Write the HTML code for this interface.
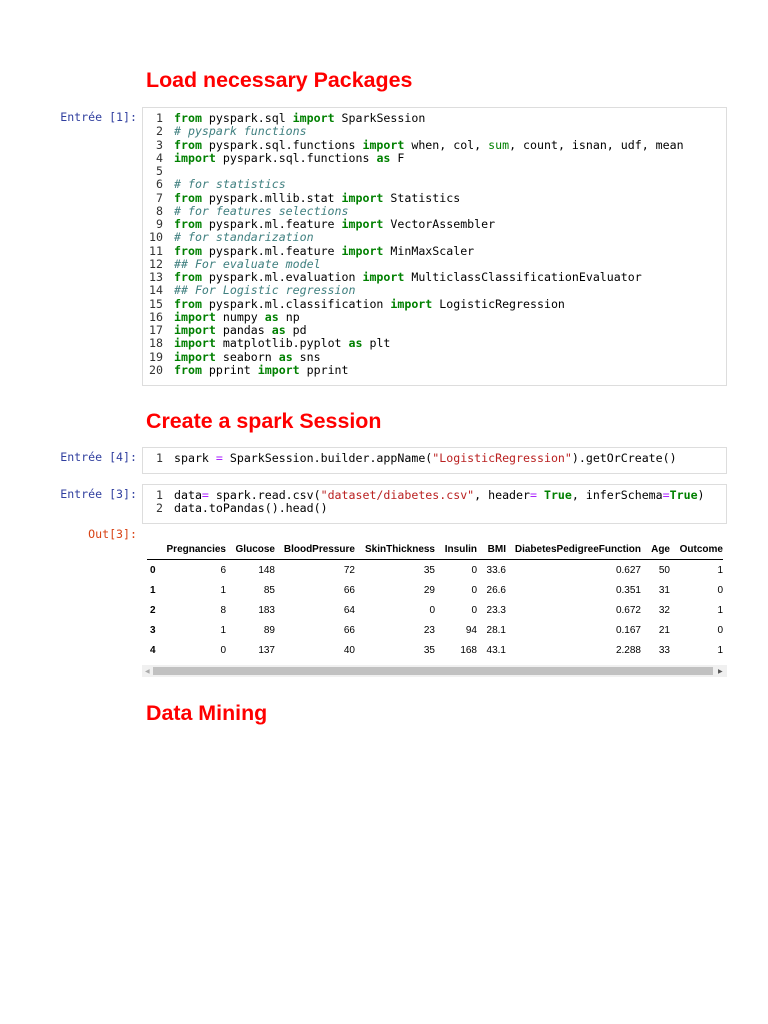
<!DOCTYPE html>
<html><head><meta charset="utf-8"><style>
body{margin:0;width:768px;height:1024px;background:#fff;position:relative;font-family:"Liberation Sans",sans-serif;}
.h{position:absolute;left:146px;color:#f00;font-weight:bold;font-size:21.4px;line-height:24px;margin:0}
.p{position:absolute;left:0;width:137px;text-align:right;font-family:"DejaVu Sans Mono",monospace;font-size:11.6px;color:#303f9f;line-height:13.25px}
.o{color:#d84315}
.box{position:absolute;left:142px;width:583px;border:1px solid #ddd;background:#fff;}
pre{margin:0;font-family:"DejaVu Sans Mono",monospace;font-size:11.6px;line-height:13.25px;color:#000;padding:4px 0 0 0}
.n{display:inline-block;width:20px;text-align:right;color:#333;margin-right:11px}
.k{color:#008000;font-weight:bold}.c{color:#408080;font-style:italic}.s{color:#ba2121}.b{color:#008000}.op{color:#aa22ff}
table{position:absolute;left:147px;top:539px;border-collapse:collapse;table-layout:fixed;font-size:10px;color:#000}
td,th{padding:0;text-align:right;height:20px;white-space:nowrap;overflow:visible}
th{font-weight:bold}
thead th{border-bottom:1px solid #000;height:20px}
tbody th{text-align:left;padding-left:3px}
</style></head><body>
<div class="h" style="top:68px">Load necessary Packages</div>
<div class="p" style="top:111px">Entrée [1]:</div>
<div class="box" style="top:107px;height:277px"><pre>
<span class="n">1</span><span class="k">from</span> pyspark.sql <span class="k">import</span> SparkSession
<span class="n">2</span><span class="c"># pyspark functions</span>
<span class="n">3</span><span class="k">from</span> pyspark.sql.functions <span class="k">import</span> when, col, <span class="b">sum</span>, count, isnan, udf, mean
<span class="n">4</span><span class="k">import</span> pyspark.sql.functions <span class="k">as</span> F
<span class="n">5</span>
<span class="n">6</span><span class="c"># for statistics</span>
<span class="n">7</span><span class="k">from</span> pyspark.mllib.stat <span class="k">import</span> Statistics
<span class="n">8</span><span class="c"># for features selections</span>
<span class="n">9</span><span class="k">from</span> pyspark.ml.feature <span class="k">import</span> VectorAssembler
<span class="n">10</span><span class="c"># for standarization</span>
<span class="n">11</span><span class="k">from</span> pyspark.ml.feature <span class="k">import</span> MinMaxScaler
<span class="n">12</span><span class="c">## For evaluate model</span>
<span class="n">13</span><span class="k">from</span> pyspark.ml.evaluation <span class="k">import</span> MulticlassClassificationEvaluator
<span class="n">14</span><span class="c">## For Logistic regression</span>
<span class="n">15</span><span class="k">from</span> pyspark.ml.classification <span class="k">import</span> LogisticRegression
<span class="n">16</span><span class="k">import</span> numpy <span class="k">as</span> np
<span class="n">17</span><span class="k">import</span> pandas <span class="k">as</span> pd
<span class="n">18</span><span class="k">import</span> matplotlib.pyplot <span class="k">as</span> plt
<span class="n">19</span><span class="k">import</span> seaborn <span class="k">as</span> sns
<span class="n">20</span><span class="k">from</span> pprint <span class="k">import</span> pprint</pre></div>
<div class="h" style="top:409px">Create a spark Session</div>
<div class="p" style="top:451px">Entrée [4]:</div>
<div class="box" style="top:447px;height:25px"><pre><span class="n">1</span>spark <span class="op">=</span> SparkSession.builder.appName(<span class="s">"LogisticRegression"</span>).getOrCreate()</pre></div>
<div class="p" style="top:488px">Entrée [3]:</div>
<div class="box" style="top:484px;height:38px"><pre><span class="n">1</span>data<span class="op">=</span> spark.read.csv(<span class="s">"dataset/diabetes.csv"</span>, header<span class="op">=</span> <span class="k">True</span>, inferSchema<span class="op">=</span><span class="k">True</span>)
<span class="n">2</span>data.toPandas().head()</pre></div>
<div class="p o" style="top:528px">Out[3]:</div>
<table>
<colgroup><col style="width:13px"><col style="width:66px"><col style="width:49px"><col style="width:80px"><col style="width:80px"><col style="width:42px"><col style="width:29px"><col style="width:135px"><col style="width:29px"><col style="width:53px"></colgroup>
<thead><tr><th></th><th>Pregnancies</th><th>Glucose</th><th>BloodPressure</th><th>SkinThickness</th><th>Insulin</th><th>BMI</th><th>DiabetesPedigreeFunction</th><th>Age</th><th>Outcome</th></tr></thead>
<tbody>
<tr><th>0</th><td>6</td><td>148</td><td>72</td><td>35</td><td>0</td><td>33.6</td><td>0.627</td><td>50</td><td>1</td></tr>
<tr><th>1</th><td>1</td><td>85</td><td>66</td><td>29</td><td>0</td><td>26.6</td><td>0.351</td><td>31</td><td>0</td></tr>
<tr><th>2</th><td>8</td><td>183</td><td>64</td><td>0</td><td>0</td><td>23.3</td><td>0.672</td><td>32</td><td>1</td></tr>
<tr><th>3</th><td>1</td><td>89</td><td>66</td><td>23</td><td>94</td><td>28.1</td><td>0.167</td><td>21</td><td>0</td></tr>
<tr><th>4</th><td>0</td><td>137</td><td>40</td><td>35</td><td>168</td><td>43.1</td><td>2.288</td><td>33</td><td>1</td></tr>
</tbody></table>
<div style="position:absolute;left:142px;top:665px;width:585px;height:12px;background:#f0f0f0"></div>
<div style="position:absolute;left:153px;top:667px;width:560px;height:8px;background:#c1c1c1"></div>
<div style="position:absolute;left:145px;top:668px;font-size:6px;color:#aaa">◀</div>
<div style="position:absolute;left:718px;top:668px;font-size:6px;color:#555">▶</div>
<div class="h" style="top:701px">Data Mining</div>
</body></html>
